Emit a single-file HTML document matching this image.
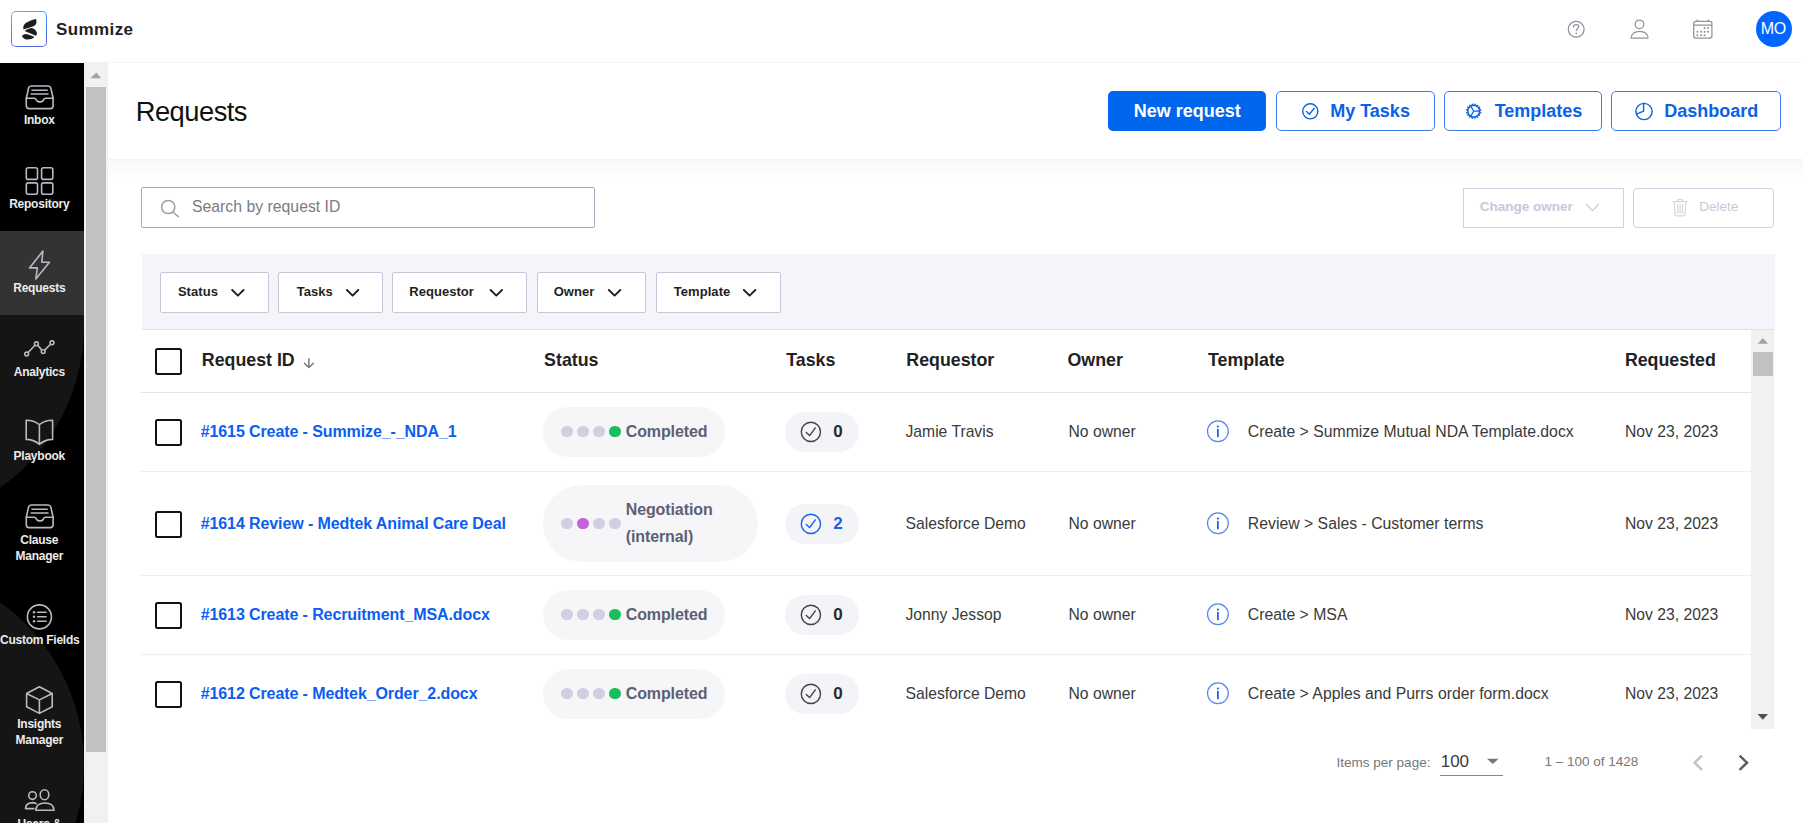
<!DOCTYPE html>
<html><head><meta charset="utf-8"><style>
*{box-sizing:border-box;margin:0;padding:0}
html,body{width:1803px;height:823px;overflow:hidden;background:#fff;font-family:"Liberation Sans",sans-serif;color:#222}
.a{position:absolute;white-space:nowrap}
svg{position:absolute;overflow:visible}
</style></head><body>
<div class="a" style="left:84px;top:62px;width:1719px;height:1px;background:#f3f4f9"></div>
<div class="a" style="left:11px;top:11px;width:36px;height:36px;border-radius:5px;padding:1.4px;background:linear-gradient(160deg,#56b8ff,#3b82ee 55%,#5a5cd8)"><div style="width:100%;height:100%;background:#fff;border-radius:3.8px"></div></div>
<svg style="left:0;top:0" width="60" height="60" viewBox="0 0 60 60">
<path d="M23.4 29.4 C23.0 27.0 23.4 24.6 25.5 23.2 C28.0 21.4 32.0 20.0 35.8 19.0 C37.0 21.0 37.0 24.6 33.6 26.2 Z" fill="#1d1d1f"/>
<path d="M24.6 31.0 C26.5 29.5 28.8 28.3 31.2 28.0 C34.0 28.3 36.6 30.6 36.9 33.4 C37.0 34.4 36.5 35.2 35.9 35.7 Z" fill="#1d1d1f"/>
<path d="M21.8 35.8 C23.0 34.8 24.5 34.1 25.9 33.9 C28.8 34.3 31.8 35.6 34.4 37.1 C32.3 39.0 29.6 39.7 26.8 39.6 C24.6 39.4 22.6 37.9 21.8 35.8 Z" fill="#1d1d1f"/>
</svg>
<div class="a" style="left:56px;top:20.31px;font-size:17px;line-height:20px;font-weight:bold;color:#1f1f22;letter-spacing:0.4px;">Summize</div>
<svg style="left:0;top:0" width="1803" height="63" viewBox="0 0 1803 63" fill="none" stroke="#92929e" stroke-width="1.25">
<circle cx="1576.2" cy="29.3" r="7.9"/>
<path d="M1573.5 27.0 C1573.5 25.3 1574.8 24.5 1576.2 24.5 C1577.7 24.5 1578.8 25.5 1578.8 26.8 C1578.8 28.4 1576.3 28.7 1576.3 30.4 V30.7" stroke-linecap="round"/>
<circle cx="1576.3" cy="33.3" r="0.85" fill="#92929e" stroke="none"/>
<circle cx="1639.5" cy="24.3" r="4.3"/>
<path d="M1631.2 38.2 C1631.2 33.8 1635 31.3 1639.6 31.3 C1644.2 31.3 1648.0 33.8 1648.0 38.2 Z" stroke-linejoin="round"/>
<rect x="1693.7" y="21.4" width="18.2" height="16.6" rx="2"/>
<path d="M1693.7 25.2 H1711.9 M1697.2 19.6 V22 M1708.4 19.6 V22"/>
<g fill="#92929e" stroke="none">
<circle cx="1704.6" cy="28" r="1"/><circle cx="1708" cy="28" r="1"/>
<circle cx="1697.4" cy="31.7" r="1"/><circle cx="1701.1" cy="31.7" r="1"/><circle cx="1704.6" cy="31.7" r="1"/><circle cx="1708" cy="31.7" r="1"/>
<circle cx="1697.4" cy="35.2" r="1"/><circle cx="1701.1" cy="35.2" r="1"/><circle cx="1704.6" cy="35.2" r="1"/>
</g>
</svg>
<div class="a" style="left:1755.6px;top:11px;width:36px;height:36px;border-radius:50%;background:#0066ff"></div>
<div class="a" style="left:1760.8px;top:20.06px;font-size:16px;line-height:18px;font-weight:normal;color:#fff;letter-spacing:-0.3px;">MO</div>
<div class="a" style="left:0;top:63px;width:84px;height:760px;background:#000;overflow:hidden"><div style="position:absolute;left:0;top:252px;width:84px;height:508px;overflow:hidden"><div style="position:absolute;left:-316px;top:-190px;width:400px;height:400px;border-radius:50%;background:#151515"></div><div style="position:absolute;left:-316px;top:250px;width:400px;height:400px;border-radius:50%;background:#151515"></div></div></div>
<div class="a" style="left:0px;top:231px;width:84px;height:84px;background:#333333"></div>
<div class="a" style="left:0;top:111.5px;width:78.6px;text-align:center;font-size:12px;line-height:16px;font-weight:bold;color:#ebebeb;letter-spacing:-0.25px">Inbox</div>
<div class="a" style="left:0;top:195.5px;width:78.6px;text-align:center;font-size:12px;line-height:16px;font-weight:bold;color:#ebebeb;letter-spacing:-0.25px">Repository</div>
<div class="a" style="left:0;top:279.5px;width:78.6px;text-align:center;font-size:12px;line-height:16px;font-weight:bold;color:#ebebeb;letter-spacing:-0.25px">Requests</div>
<div class="a" style="left:0;top:363.5px;width:78.6px;text-align:center;font-size:12px;line-height:16px;font-weight:bold;color:#ebebeb;letter-spacing:-0.25px">Analytics</div>
<div class="a" style="left:0;top:447.5px;width:78.6px;text-align:center;font-size:12px;line-height:16px;font-weight:bold;color:#ebebeb;letter-spacing:-0.25px">Playbook</div>
<div class="a" style="left:0;top:531.5px;width:78.6px;text-align:center;font-size:12px;line-height:16px;font-weight:bold;color:#ebebeb;letter-spacing:-0.25px">Clause<br>Manager</div>
<div class="a" style="left:0;top:631.5px;width:78.6px;text-align:center;font-size:12px;line-height:16px;font-weight:bold;color:#ebebeb;letter-spacing:-0.25px">Custom Fields</div>
<div class="a" style="left:0;top:715.5px;width:78.6px;text-align:center;font-size:12px;line-height:16px;font-weight:bold;color:#ebebeb;letter-spacing:-0.25px">Insights<br>Manager</div>
<div class="a" style="left:0;top:815.5px;width:78.6px;text-align:center;font-size:12px;line-height:16px;font-weight:bold;color:#ebebeb;letter-spacing:-0.25px">Users &amp;<br>Groups</div>
<svg style="left:0;top:0" width="84" height="823" viewBox="0 0 84 823" fill="none" stroke="#b9b9c2" stroke-width="1.6" stroke-linecap="round" stroke-linejoin="round">
<g id="tray">
<path d="M26.3 98.2 L28.6 88.0 Q29.1 86.0 31.2 86.0 H48.2 Q50.3 86.0 50.8 88.0 L53.1 98.2"/>
<path d="M26.3 98.2 H34.2 Q35.6 98.2 36.1 99.6 Q36.9 101.9 39.2 101.9 H40.6 Q42.9 101.9 43.7 99.6 Q44.2 98.2 45.6 98.2 H53.1 V105.8 Q53.1 108.6 50.3 108.6 H29.1 Q26.3 108.6 26.3 105.8 Z"/>
<path d="M32.0 90.2 H47.2 M31.2 94.0 H48.0"/>
</g>
<use href="#tray" transform="translate(0,419)"/>
<rect x="26.3" y="167.8" width="11.2" height="11.6" rx="2"/>
<rect x="41.6" y="167.8" width="11.2" height="11.6" rx="2"/>
<rect x="26.3" y="182.9" width="11.2" height="11.4" rx="2"/>
<rect x="41.6" y="182.9" width="11.2" height="11.4" rx="2"/>
<path d="M42.9 251.1 L29.5 267.9 H37.4 L35.8 279.0 L49.4 262.2 H41.8 Z"/>
<path d="M26.7 354 L36.4 343.8 L43.2 351.6 L52 342.8"/>
<g fill="#000" ><circle cx="26.7" cy="354" r="1.9"/><circle cx="36.4" cy="343.8" r="1.9"/><circle cx="43.2" cy="351.6" r="1.9"/><circle cx="52" cy="342.8" r="1.9"/></g>
<path d="M39.4 424.6 Q33.5 420.2 26.2 420.3 V439.4 Q33.5 439.4 39.4 444.3 Q45.3 439.4 52.6 439.4 V420.3 Q45.3 420.2 39.4 424.6 Z M39.4 424.6 V443.5"/>
<circle cx="39.4" cy="616.9" r="12"/>
<path d="M37.6 612.3 H46.1 M37.6 616.8 H46.1 M37.6 621.3 H46.1"/>
<g fill="#b9b9c2" stroke="none"><circle cx="34" cy="612.3" r="1.2"/><circle cx="34" cy="616.8" r="1.2"/><circle cx="34" cy="621.3" r="1.2"/></g>
<path d="M39.4 686.8 L52.2 693.5 V706.8 L39.4 713.4 L26.6 706.8 V693.5 Z M26.6 693.5 L39.4 699.9 L52.2 693.5 M39.4 699.9 V713.4"/>
<circle cx="32.5" cy="795.6" r="3.8"/>
<ellipse cx="44.5" cy="794.7" rx="4.3" ry="5"/>
<path d="M34.0 808.6 H25.6 Q25.4 803.3 32.4 802.6 Q34.6 802.6 36.2 803.6"/>
<path d="M35.8 810.2 Q36.2 803.0 44.9 803.0 Q53.6 803.0 54.0 810.2 Z"/>
</svg>
<div class="a" style="left:84px;top:63px;width:24px;height:760px;background:#f1f1f1"></div>
<svg style="left:84px;top:63px" width="24" height="20" viewBox="0 0 24 20"><path d="M6.5 15.2 L12.3 9.6 L17.2 15.2 Z" fill="#a3a3a3"/></svg>
<div class="a" style="left:86px;top:87px;width:20px;height:665px;background:#c1c1c1"></div>
<div class="a" style="left:108px;top:159px;width:1695px;height:1px;background:#f3f4f8"></div>
<div class="a" style="left:108px;top:160px;width:1695px;height:20px;background:linear-gradient(#f8f8fb,#fff)"></div>
<div class="a" style="left:135.7px;top:96.24px;font-size:27.3px;line-height:32px;font-weight:normal;color:#111;letter-spacing:-0.5px;">Requests</div>
<div class="a" style="left:1107.5px;top:91px;width:158.5px;height:40px;background:#0066ee;border-radius:5px"></div>
<div class="a" style="left:1133.8px;top:100.76px;font-size:18px;line-height:20px;font-weight:bold;color:#fff;letter-spacing:0px;">New request</div>
<div class="a" style="left:1276px;top:91px;width:158.5px;height:40px;border:1.3px solid #3d7cee;border-radius:5px;background:#fff"></div>
<div class="a" style="left:1444px;top:91px;width:158px;height:40px;border:1.3px solid #3d7cee;border-radius:5px;background:#fff"></div>
<div class="a" style="left:1611px;top:91px;width:170px;height:40px;border:1.3px solid #3d7cee;border-radius:5px;background:#fff"></div>
<div class="a" style="left:1330.2px;top:100.76px;font-size:18px;line-height:20px;font-weight:bold;color:#0a62e8;letter-spacing:0px;">My Tasks</div>
<div class="a" style="left:1494.7px;top:100.76px;font-size:18px;line-height:20px;font-weight:bold;color:#0a62e8;letter-spacing:0px;">Templates</div>
<div class="a" style="left:1664.2px;top:100.76px;font-size:18px;line-height:20px;font-weight:bold;color:#0a62e8;letter-spacing:0px;">Dashboard</div>
<svg style="left:0;top:0" width="1803" height="160" viewBox="0 0 1803 160" fill="none" stroke="#0a62e8" stroke-width="1.4" stroke-linecap="round" stroke-linejoin="round">
<circle cx="1310.3" cy="111.3" r="7.6"/>
<path d="M1306.6 111.6 L1309.3 114.3 L1314.2 108.4"/>
<circle cx="1473.7" cy="111.2" r="5.9" stroke-width="1.5"/>
<path d="M1473.7 111.2 L1479.30 111.20 M1473.7 111.2 L1470.90 116.05 M1473.7 111.2 L1470.90 106.35" stroke-width="1.3"/>
<path d="M1479.78 112.41 L1481.25 112.70 M1478.86 114.64 L1480.10 115.48 M1477.14 116.36 L1477.98 117.60 M1474.91 117.28 L1475.20 118.75 M1472.49 117.28 L1472.20 118.75 M1470.26 116.36 L1469.42 117.60 M1468.54 114.64 L1467.30 115.48 M1467.62 112.41 L1466.15 112.70 M1467.62 109.99 L1466.15 109.70 M1468.54 107.76 L1467.30 106.92 M1470.26 106.04 L1469.42 104.80 M1472.49 105.12 L1472.20 103.65 M1474.91 105.12 L1475.20 103.65 M1477.14 106.04 L1477.98 104.80 M1478.86 107.76 L1480.10 106.92 M1479.78 109.99 L1481.25 109.70" stroke-width="1.5" stroke-linecap="butt"/>
<circle cx="1644" cy="111.5" r="8.1"/>
<path d="M1643.6 103.2 V111.2 L1636.4 114.1"/>
</svg>
<div class="a" style="left:141px;top:187px;width:453.5px;height:40.5px;border:1.2px solid #a9abba;border-radius:2px;background:#fff"></div>
<svg style="left:0;top:0" width="200" height="230" viewBox="0 0 200 230" fill="none" stroke="#9a9caa" stroke-width="1.5" stroke-linecap="round"><circle cx="168.2" cy="207" r="6.6"/><path d="M173.2 212.2 L178.3 216.8"/></svg>
<div class="a" style="left:192px;top:196.53px;font-size:15.8px;line-height:20px;font-weight:normal;color:#7b7b82;letter-spacing:0px;">Search by request ID</div>
<div class="a" style="left:1463px;top:187.5px;width:160.5px;height:40px;border:1.2px solid #cdd0de;background:#fff"></div>
<div class="a" style="left:1479.8px;top:199.32px;font-size:13.5px;line-height:16px;font-weight:bold;color:#c6c9d9;letter-spacing:0px;">Change owner</div>
<svg style="left:0;top:0" width="1803" height="230" viewBox="0 0 1803 230" fill="none" stroke="#c9ccdb" stroke-width="1.3" stroke-linecap="round" stroke-linejoin="round"><path d="M1586.3 204.5 L1592.4 210.6 L1598.5 204.5"/></svg>
<div class="a" style="left:1633.3px;top:187.5px;width:141px;height:40px;border:1.2px solid #cdd0de;border-radius:4px;background:#fff"></div>
<svg style="left:0;top:0" width="1803" height="230" viewBox="0 0 1803 230" fill="none" stroke="#d8d8dc" stroke-width="1.2" stroke-linecap="round" stroke-linejoin="round"><path d="M1672.8 201.6 H1687.3 M1677.6 201.4 V199.6 H1682.6 V201.4 M1674.2 202 L1675.1 215.2 Q1675.2 215.9 1676 215.9 H1684.1 Q1684.9 215.9 1685 215.2 L1685.9 202 M1677.7 204.5 V213.4 M1680.1 204.5 V213.4 M1682.5 204.5 V213.4"/></svg>
<div class="a" style="left:1699.3px;top:199.32px;font-size:13.5px;line-height:16px;font-weight:normal;color:#c6c9d9;letter-spacing:0px;">Delete</div>
<div class="a" style="left:141.5px;top:254px;width:1633.5px;height:76px;background:#f3f5fa;border-bottom:1px solid #dfe0e3"></div>
<div class="a" style="left:160px;top:272.2px;width:109px;height:40.6px;border:1px solid #c5c8d8;border-radius:2px;background:#fff"></div>
<div class="a" style="left:177.9px;top:284.20px;font-size:13px;line-height:16px;font-weight:bold;color:#1f1f1f;letter-spacing:0.05px;">Status</div>
<div class="a" style="left:278.3px;top:272.2px;width:105.09999999999997px;height:40.6px;border:1px solid #c5c8d8;border-radius:2px;background:#fff"></div>
<div class="a" style="left:296.7px;top:284.20px;font-size:13px;line-height:16px;font-weight:bold;color:#1f1f1f;letter-spacing:0.05px;">Tasks</div>
<div class="a" style="left:392.4px;top:272.2px;width:134.60000000000002px;height:40.6px;border:1px solid #c5c8d8;border-radius:2px;background:#fff"></div>
<div class="a" style="left:409.2px;top:284.20px;font-size:13px;line-height:16px;font-weight:bold;color:#1f1f1f;letter-spacing:0.05px;">Requestor</div>
<div class="a" style="left:537px;top:272.2px;width:108.79999999999995px;height:40.6px;border:1px solid #c5c8d8;border-radius:2px;background:#fff"></div>
<div class="a" style="left:553.7px;top:284.20px;font-size:13px;line-height:16px;font-weight:bold;color:#1f1f1f;letter-spacing:0.05px;">Owner</div>
<div class="a" style="left:656px;top:272.2px;width:125.29999999999995px;height:40.6px;border:1px solid #c5c8d8;border-radius:2px;background:#fff"></div>
<div class="a" style="left:673.8px;top:284.20px;font-size:13px;line-height:16px;font-weight:bold;color:#1f1f1f;letter-spacing:0.05px;">Template</div>
<svg style="left:0;top:0" width="1803" height="330" viewBox="0 0 1803 330" fill="none" stroke="#222" stroke-width="1.9" stroke-linecap="round" stroke-linejoin="round"><path d="M232.20000000000002 290 L237.9 295.6 L243.60000000000002 290 M346.9 290 L352.6 295.6 L358.3 290 M490.59999999999997 290 L496.3 295.6 L502.0 290 M608.9 290 L614.6 295.6 L620.3 290 M743.9 290 L749.6 295.6 L755.3 290"/></svg>
<div class="a" style="left:141px;top:392px;width:1610px;height:1px;background:#e3e4ea"></div>
<div class="a" style="left:141px;top:471px;width:1610px;height:1px;background:#eceef4"></div>
<div class="a" style="left:141px;top:575px;width:1610px;height:1px;background:#eceef4"></div>
<div class="a" style="left:141px;top:654px;width:1610px;height:1px;background:#eceef4"></div>
<div class="a" style="left:155px;top:348px;width:27px;height:27px;border:2px solid #111;border-radius:2.5px;background:#fff"></div>
<div class="a" style="left:201.8px;top:350.03px;font-size:17.8px;line-height:20px;font-weight:bold;color:#222;letter-spacing:0px;">Request ID</div>
<div class="a" style="left:544.1px;top:350.03px;font-size:17.8px;line-height:20px;font-weight:bold;color:#222;letter-spacing:0px;">Status</div>
<div class="a" style="left:786.3px;top:350.03px;font-size:17.8px;line-height:20px;font-weight:bold;color:#222;letter-spacing:0px;">Tasks</div>
<div class="a" style="left:906.3px;top:350.03px;font-size:17.8px;line-height:20px;font-weight:bold;color:#222;letter-spacing:0px;">Requestor</div>
<div class="a" style="left:1067.5px;top:350.03px;font-size:17.8px;line-height:20px;font-weight:bold;color:#222;letter-spacing:0px;">Owner</div>
<div class="a" style="left:1208px;top:350.03px;font-size:17.8px;line-height:20px;font-weight:bold;color:#222;letter-spacing:0px;">Template</div>
<div class="a" style="left:1624.9px;top:350.03px;font-size:17.8px;line-height:20px;font-weight:bold;color:#222;letter-spacing:0px;">Requested</div>
<svg style="left:0;top:0" width="400" height="400" viewBox="0 0 400 400" fill="none" stroke="#777" stroke-width="1.4" stroke-linecap="round" stroke-linejoin="round"><path d="M308.9 358.8 V367.4 M304.4 363.2 L308.9 367.6 L313.4 363.2"/></svg>
<div class="a" style="left:155px;top:419.0px;width:27px;height:27px;border:2px solid #111;border-radius:2.5px;background:#fff"></div>
<div class="a" style="left:200.7px;top:421.56px;font-size:16px;line-height:20px;font-weight:bold;color:#0b5ef0;letter-spacing:-0.1px;">#1615 Create - Summize_-_NDA_1</div>
<div class="a" style="left:543.4px;top:406.5px;width:181.5px;height:50px;border-radius:25px;background:#f6f6f9"></div>
<div class="a" style="left:625.7px;top:421.56px;font-size:16px;line-height:20px;font-weight:bold;color:#5d6072;letter-spacing:-0.1px;">Completed</div>
<div class="a" style="left:561.0px;top:425.6px;width:11.8px;height:11.8px;border-radius:50%;background:#cfd0e0"></div>
<div class="a" style="left:577.1px;top:425.6px;width:11.8px;height:11.8px;border-radius:50%;background:#cfd0e0"></div>
<div class="a" style="left:593.2px;top:425.6px;width:11.8px;height:11.8px;border-radius:50%;background:#cfd0e0"></div>
<div class="a" style="left:609.3px;top:425.6px;width:11.8px;height:11.8px;border-radius:50%;background:#16bf5c"></div>
<div class="a" style="left:785.3px;top:411.9px;width:73.6px;height:40.4px;border-radius:20.2px;background:#f3f4f8"></div>
<div class="a" style="left:833.2px;top:421.91px;font-size:17px;line-height:20px;font-weight:bold;color:#2a2a2a;letter-spacing:0px;">0</div>
<div class="a" style="left:905.5px;top:421.66px;font-size:15.7px;line-height:20px;font-weight:normal;color:#3a3a3a;letter-spacing:0px;">Jamie Travis</div>
<div class="a" style="left:1068.5px;top:421.66px;font-size:15.7px;line-height:20px;font-weight:normal;color:#3a3a3a;letter-spacing:0px;">No owner</div>
<div class="a" style="left:1247.8px;top:421.63px;font-size:15.8px;line-height:20px;font-weight:normal;color:#3a3a3a;letter-spacing:0px;">Create &gt; Summize Mutual NDA Template.docx</div>
<div class="a" style="left:1625px;top:421.66px;font-size:15.7px;line-height:20px;font-weight:normal;color:#3a3a3a;letter-spacing:0px;">Nov 23, 2023</div>
<div class="a" style="left:155px;top:511.0px;width:27px;height:27px;border:2px solid #111;border-radius:2.5px;background:#fff"></div>
<div class="a" style="left:200.7px;top:513.56px;font-size:16px;line-height:20px;font-weight:bold;color:#0b5ef0;letter-spacing:-0.1px;">#1614 Review - Medtek Animal Care Deal</div>
<div class="a" style="left:543.4px;top:485.0px;width:214.5px;height:77px;border-radius:38.5px;background:#f6f6f9"></div>
<div class="a" style="left:625.7px;top:499.96px;font-size:16px;line-height:20px;font-weight:bold;color:#5d6072;letter-spacing:-0.1px;">Negotiation</div>
<div class="a" style="left:625.7px;top:526.96px;font-size:16px;line-height:20px;font-weight:bold;color:#5d6072;letter-spacing:-0.1px;">(internal)</div>
<div class="a" style="left:561.0px;top:517.6px;width:11.8px;height:11.8px;border-radius:50%;background:#cfd0e0"></div>
<div class="a" style="left:577.1px;top:517.6px;width:11.8px;height:11.8px;border-radius:50%;background:#c163dc"></div>
<div class="a" style="left:593.2px;top:517.6px;width:11.8px;height:11.8px;border-radius:50%;background:#cfd0e0"></div>
<div class="a" style="left:609.3px;top:517.6px;width:11.8px;height:11.8px;border-radius:50%;background:#cfd0e0"></div>
<div class="a" style="left:785.3px;top:503.9px;width:73.6px;height:40.4px;border-radius:20.2px;background:#f3f4f8"></div>
<div class="a" style="left:833.2px;top:513.91px;font-size:17px;line-height:20px;font-weight:bold;color:#1662e8;letter-spacing:0px;">2</div>
<div class="a" style="left:905.5px;top:513.66px;font-size:15.7px;line-height:20px;font-weight:normal;color:#3a3a3a;letter-spacing:0px;">Salesforce Demo</div>
<div class="a" style="left:1068.5px;top:513.66px;font-size:15.7px;line-height:20px;font-weight:normal;color:#3a3a3a;letter-spacing:0px;">No owner</div>
<div class="a" style="left:1247.8px;top:513.63px;font-size:15.8px;line-height:20px;font-weight:normal;color:#3a3a3a;letter-spacing:0px;">Review &gt; Sales - Customer terms</div>
<div class="a" style="left:1625px;top:513.66px;font-size:15.7px;line-height:20px;font-weight:normal;color:#3a3a3a;letter-spacing:0px;">Nov 23, 2023</div>
<div class="a" style="left:155px;top:602.0px;width:27px;height:27px;border:2px solid #111;border-radius:2.5px;background:#fff"></div>
<div class="a" style="left:200.7px;top:604.56px;font-size:16px;line-height:20px;font-weight:bold;color:#0b5ef0;letter-spacing:-0.1px;">#1613 Create - Recruitment_MSA.docx</div>
<div class="a" style="left:543.4px;top:589.5px;width:181.5px;height:50px;border-radius:25px;background:#f6f6f9"></div>
<div class="a" style="left:625.7px;top:604.56px;font-size:16px;line-height:20px;font-weight:bold;color:#5d6072;letter-spacing:-0.1px;">Completed</div>
<div class="a" style="left:561.0px;top:608.6px;width:11.8px;height:11.8px;border-radius:50%;background:#cfd0e0"></div>
<div class="a" style="left:577.1px;top:608.6px;width:11.8px;height:11.8px;border-radius:50%;background:#cfd0e0"></div>
<div class="a" style="left:593.2px;top:608.6px;width:11.8px;height:11.8px;border-radius:50%;background:#cfd0e0"></div>
<div class="a" style="left:609.3px;top:608.6px;width:11.8px;height:11.8px;border-radius:50%;background:#16bf5c"></div>
<div class="a" style="left:785.3px;top:594.9px;width:73.6px;height:40.4px;border-radius:20.2px;background:#f3f4f8"></div>
<div class="a" style="left:833.2px;top:604.91px;font-size:17px;line-height:20px;font-weight:bold;color:#2a2a2a;letter-spacing:0px;">0</div>
<div class="a" style="left:905.5px;top:604.66px;font-size:15.7px;line-height:20px;font-weight:normal;color:#3a3a3a;letter-spacing:0px;">Jonny Jessop</div>
<div class="a" style="left:1068.5px;top:604.66px;font-size:15.7px;line-height:20px;font-weight:normal;color:#3a3a3a;letter-spacing:0px;">No owner</div>
<div class="a" style="left:1247.8px;top:604.63px;font-size:15.8px;line-height:20px;font-weight:normal;color:#3a3a3a;letter-spacing:0px;">Create &gt; MSA</div>
<div class="a" style="left:1625px;top:604.66px;font-size:15.7px;line-height:20px;font-weight:normal;color:#3a3a3a;letter-spacing:0px;">Nov 23, 2023</div>
<div class="a" style="left:155px;top:681.0px;width:27px;height:27px;border:2px solid #111;border-radius:2.5px;background:#fff"></div>
<div class="a" style="left:200.7px;top:683.56px;font-size:16px;line-height:20px;font-weight:bold;color:#0b5ef0;letter-spacing:-0.1px;">#1612 Create - Medtek_Order_2.docx</div>
<div class="a" style="left:543.4px;top:668.5px;width:181.5px;height:50px;border-radius:25px;background:#f6f6f9"></div>
<div class="a" style="left:625.7px;top:683.56px;font-size:16px;line-height:20px;font-weight:bold;color:#5d6072;letter-spacing:-0.1px;">Completed</div>
<div class="a" style="left:561.0px;top:687.6px;width:11.8px;height:11.8px;border-radius:50%;background:#cfd0e0"></div>
<div class="a" style="left:577.1px;top:687.6px;width:11.8px;height:11.8px;border-radius:50%;background:#cfd0e0"></div>
<div class="a" style="left:593.2px;top:687.6px;width:11.8px;height:11.8px;border-radius:50%;background:#cfd0e0"></div>
<div class="a" style="left:609.3px;top:687.6px;width:11.8px;height:11.8px;border-radius:50%;background:#16bf5c"></div>
<div class="a" style="left:785.3px;top:673.9px;width:73.6px;height:40.4px;border-radius:20.2px;background:#f3f4f8"></div>
<div class="a" style="left:833.2px;top:683.91px;font-size:17px;line-height:20px;font-weight:bold;color:#2a2a2a;letter-spacing:0px;">0</div>
<div class="a" style="left:905.5px;top:683.66px;font-size:15.7px;line-height:20px;font-weight:normal;color:#3a3a3a;letter-spacing:0px;">Salesforce Demo</div>
<div class="a" style="left:1068.5px;top:683.66px;font-size:15.7px;line-height:20px;font-weight:normal;color:#3a3a3a;letter-spacing:0px;">No owner</div>
<div class="a" style="left:1247.8px;top:683.63px;font-size:15.8px;line-height:20px;font-weight:normal;color:#3a3a3a;letter-spacing:0px;">Create &gt; Apples and Purrs order form.docx</div>
<div class="a" style="left:1625px;top:683.66px;font-size:15.7px;line-height:20px;font-weight:normal;color:#3a3a3a;letter-spacing:0px;">Nov 23, 2023</div>
<svg style="left:0;top:0" width="1803" height="823" viewBox="0 0 1803 823" fill="none" stroke-width="1.4" stroke-linecap="round" stroke-linejoin="round"><circle cx="810.9" cy="431.9" r="9.6" stroke="#444"/><path d="M806.3 432.4 L809.6 435.6 L815.3 427.9" stroke="#444"/><circle cx="1217.9" cy="431.3" r="10.4" stroke="#5a86f2" stroke-width="1.25"/><path d="M1217.9 429.7 V436.5" stroke="#0d5af0" stroke-width="1.7"/><circle cx="1217.9" cy="426.6" r="1.05" fill="#0d5af0" stroke="none"/><circle cx="810.9" cy="523.9" r="9.6" stroke="#1662e8"/><path d="M806.3 524.4 L809.6 527.6 L815.3 519.9" stroke="#1662e8"/><circle cx="1217.9" cy="523.3" r="10.4" stroke="#5a86f2" stroke-width="1.25"/><path d="M1217.9 521.7 V528.5" stroke="#0d5af0" stroke-width="1.7"/><circle cx="1217.9" cy="518.6" r="1.05" fill="#0d5af0" stroke="none"/><circle cx="810.9" cy="614.9" r="9.6" stroke="#444"/><path d="M806.3 615.4 L809.6 618.6 L815.3 610.9" stroke="#444"/><circle cx="1217.9" cy="614.3" r="10.4" stroke="#5a86f2" stroke-width="1.25"/><path d="M1217.9 612.7 V619.5" stroke="#0d5af0" stroke-width="1.7"/><circle cx="1217.9" cy="609.6" r="1.05" fill="#0d5af0" stroke="none"/><circle cx="810.9" cy="693.9" r="9.6" stroke="#444"/><path d="M806.3 694.4 L809.6 697.6 L815.3 689.9" stroke="#444"/><circle cx="1217.9" cy="693.3" r="10.4" stroke="#5a86f2" stroke-width="1.25"/><path d="M1217.9 691.7 V698.5" stroke="#0d5af0" stroke-width="1.7"/><circle cx="1217.9" cy="688.6" r="1.05" fill="#0d5af0" stroke="none"/></svg>
<div class="a" style="left:141px;top:729px;width:1634px;height:94px;background:#fff"></div>
<div class="a" style="left:1751px;top:330px;width:23.2px;height:399px;background:#f1f1f1"></div>
<svg style="left:0;top:0" width="1803" height="823" viewBox="0 0 1803 823"><path d="M1757.7 343.8 L1762.9 338 L1768 343.8 Z" fill="#a3a3a3"/><path d="M1757.6 713.9 L1762.8 719.7 L1768 713.9 Z" fill="#505050"/></svg>
<div class="a" style="left:1753px;top:352.4px;width:20px;height:23.6px;background:#c1c1c1"></div>
<div class="a" style="left:1336.6px;top:754.52px;font-size:13.5px;line-height:16px;font-weight:normal;color:#777;letter-spacing:0px;">Items per page:</div>
<div class="a" style="left:1440.7px;top:751.51px;font-size:17px;line-height:20px;font-weight:normal;color:#3a3a3a;letter-spacing:0px;">100</div>
<div class="a" style="left:1440px;top:774.5px;width:63.2px;height:1px;background:#8a8a8a"></div>
<div class="a" style="left:1544.5px;top:754.22px;font-size:13.5px;line-height:16px;font-weight:normal;color:#777;letter-spacing:0px;">1 – 100 of 1428</div>
<svg style="left:0;top:0" width="1803" height="823" viewBox="0 0 1803 823" fill="none" stroke-width="2.2" stroke-linecap="round" stroke-linejoin="round"><path d="M1487 758.7 H1498.6 L1492.8 763.9 Z" fill="#777" stroke="none"/><path d="M1702 755.6 L1694.6 762.7 L1702 769.8" stroke="#c2c2c2" stroke-width="2.5" stroke-linecap="butt" stroke-linejoin="miter"/><path d="M1739.6 755.6 L1747 762.7 L1739.6 769.8" stroke="#5e5e5e" stroke-width="2.5" stroke-linecap="butt" stroke-linejoin="miter"/></svg>
</body></html>
